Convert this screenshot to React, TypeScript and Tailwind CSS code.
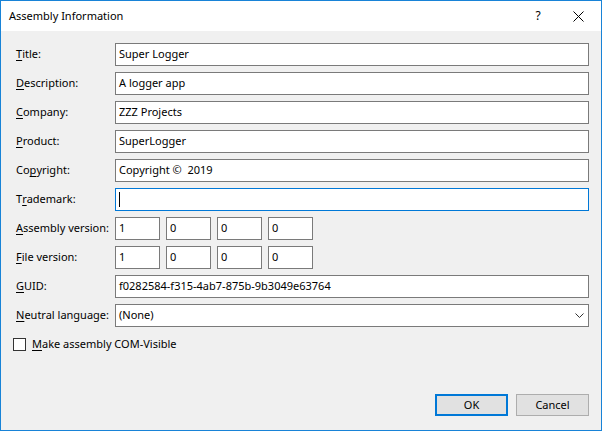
// Assembly Information dialog (Windows 10 style)
import React from 'react'

const font = "font-['Noto_Sans',sans-serif]"

function Label({ pre = '', u, post }: { pre?: string; u: string; post: string }) {
  return (
    <div className="h-[23px] flex items-center text-[11px] text-black whitespace-nowrap">
      {pre}
      <span className="underline underline-offset-2">{u}</span>
      {post}
    </div>
  )
}

function Box({ children, focused }: { children?: React.ReactNode; focused?: boolean }) {
  return (
    <div
      className={
        'h-[23px] bg-white flex items-center pl-[3px] text-[11px] text-black whitespace-nowrap ' +
        (focused ? 'border border-[#0078d7]' : 'border border-[#7a7a7a]')
      }
    >
      {children}
    </div>
  )
}

function VersionRow({ parts }: { parts: string[] }) {
  return (
    <div className="flex gap-[6px]">
      {parts.map((p, i) => (
        <div
          key={i}
          className="w-[45px] h-[23px] bg-white border border-[#7a7a7a] flex items-center pl-[3px] text-[11px] text-black"
        >
          {p}
        </div>
      ))}
    </div>
  )
}

export default function App() {
  return (
    <div className={`w-[602px] h-[431px] border border-[#1883d7] flex flex-col ${font}`}>
      {/* title bar */}
      <div className="h-[30px] bg-white flex items-center pl-[8px] text-[11px] text-black">
        <span className="flex-1">Assembly Information</span>
        <span className="w-[14px] text-center mr-[28px] text-[12px]">?</span>
        <svg width="11" height="11" viewBox="0 0 11 11" className="mr-[17px]">
          <path d="M0.5 0.5 L10.5 10.5 M10.5 0.5 L0.5 10.5" stroke="#000" strokeWidth="1" />
        </svg>
      </div>

      <div className="flex-1 bg-[#f0f0f0] flex flex-col pt-[12px] pl-[15px] pr-[12px] pb-[14px]">
        <div className="grid grid-cols-[99px_1fr] gap-y-[6px]">
          <Label u="T" post="itle:" />
          <Box>Super Logger</Box>

          <Label u="D" post="escription:" />
          <Box>A logger app</Box>

          <Label u="C" post="ompany:" />
          <Box>ZZZ Projects</Box>

          <Label u="P" post="roduct:" />
          <Box>SuperLogger</Box>

          <Label pre="Co" u="p" post="yright:" />
          <Box>Copyright ©&nbsp; 2019</Box>

          <Label pre="T" u="r" post="ademark:" />
          <Box focused>
            <span className="w-px h-[15px] bg-black" />
          </Box>

          <Label u="A" post="ssembly version:" />
          <VersionRow parts={['1', '0', '0', '0']} />

          <Label u="F" post="ile version:" />
          <VersionRow parts={['1', '0', '0', '0']} />

          <Label u="G" post="UID:" />
          <Box>f0282584-f315-4ab7-875b-9b3049e63764</Box>

          <Label u="N" post="eutral language:" />
          <div className="h-[23px] bg-white border border-[#7a7a7a] flex items-center pl-[3px] text-[11px] text-black">
            <span className="flex-1">(None)</span>
            <svg width="9" height="6" viewBox="0 0 9 6" className="mr-[4px]">
              <path d="M0.5 0.5 L4.5 4.5 L8.5 0.5" stroke="#333" strokeWidth="1" fill="none" />
            </svg>
          </div>
        </div>

        {/* COM visible checkbox */}
        <div className="flex items-center mt-[11px] -ml-[3px] h-[13px]">
          <div className="w-[13px] h-[13px] bg-white border border-[#333]" />
          <span className="ml-[6px] text-[11px] text-black">
            <span className="underline underline-offset-2">M</span>ake assembly COM-Visible
          </span>
        </div>

        {/* dialog buttons */}
        <div className="mt-auto flex justify-end gap-[8px]">
          <button className="w-[73px] h-[22px] bg-[#e1e1e1] border-2 border-[#0078d7] text-[11px] text-black">
            OK
          </button>
          <button className="w-[73px] h-[22px] bg-[#e1e1e1] border border-[#adadad] text-[11px] text-black">
            Cancel
          </button>
        </div>
      </div>
    </div>
  )
}
